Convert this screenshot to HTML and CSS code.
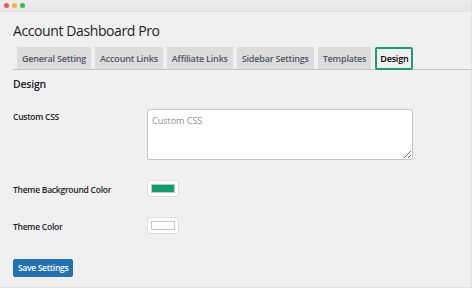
FILE: index.html
```html
<!DOCTYPE html>
<html lang="en">
<head>
    <meta charset="UTF-8">
    <meta name="viewport" content="width=device-width, initial-scale=1.0">
    <title>Account Dashboard Pro</title>
    <link rel="stylesheet" href="styles.css">
</head>
<body>

    <div class="window">
        <div class="window-bar">
            <span class="dot red"></span>
            <span class="dot yellow"></span>
            <span class="dot green"></span>
        </div>

        <div class="wrap">
            <h1>Account Dashboard Pro</h1>

            <nav class="tabs">
                <a href="#" class="tab">General Setting</a>
                <a href="#" class="tab">Account Links</a>
                <a href="#" class="tab">Affiliate Links</a>
                <a href="#" class="tab">Sidebar Settings</a>
                <a href="#" class="tab">Templates</a>
                <a href="#" class="tab active">Design</a>
            </nav>

            <h2>Design</h2>

            <form class="settings">
                <div class="row row-textarea">
                    <label for="custom_css">Custom CSS</label>
                    <textarea id="custom_css" placeholder="Custom CSS"></textarea>
                </div>
                <div class="row">
                    <label for="theme_bg">Theme Background Color</label>
                    <span class="swatch" id="theme_bg"><span class="swatch-fill" style="background: #0f9d6c;"></span></span>
                </div>
                <div class="row">
                    <label for="theme_color">Theme Color</label>
                    <span class="swatch" id="theme_color"><span class="swatch-fill" style="background: #ffffff;"></span></span>
                </div>
                <button type="submit" class="save">Save Settings</button>
            </form>
        </div>
    </div>

</body>
</html>
```

FILE: styles.css
```css
body {
    margin: 0;
    background-color: #ffffff;
    font-family: "Open Sans", "Noto Sans", sans-serif;
    color: #1d2327;
}
.window {
    width: 471px;
    height: 287px;
    background-color: #f0f0f1;
    border-right: 1px solid #e2e2e4;
    border-bottom: 1px solid #e2e2e4;
    overflow: hidden;
}
.window-bar {
    height: 11px;
    background: linear-gradient(#ececed, #e6e6e7);
    border-bottom: 1px solid #e0e0e2;
    display: flex;
    align-items: center;
    gap: 3px;
    padding-left: 4px;
}
.dot {
    width: 5px;
    height: 5px;
    border-radius: 50%;
}
.dot.red { background-color: #f0565a; }
.dot.yellow { background-color: #f5b53a; }
.dot.green { background-color: #2fbf55; }
.wrap {
    padding-left: 13px;
}
h1 {
    margin: 0;
    padding-top: 9px;
    font-size: 14px;
    font-weight: 400;
    line-height: 20px;
    letter-spacing: -0.4px;
}
.tabs {
    display: flex;
    gap: 4px;
    margin-top: 6px;
    padding-left: 4px;
    border-bottom: 1px solid #c3c4c7;
    height: 22px;
}
.tab {
    display: flex;
    align-items: center;
    padding: 0 4px;
    background-color: #dcdcde;
    color: #50575e;
    font-size: 9px;
    font-weight: 600;
    letter-spacing: -0.2px;
    text-decoration: none;
    border: 1px solid #dcdcde;
    border-bottom: none;
}
.tab.active {
    background-color: #f0f0f1;
    color: #000000;
    border: 2px solid #1a9e6e;
    border-radius: 2px;
    height: 23px;
    padding: 0 3px;
    box-sizing: border-box;
}
h2 {
    margin: 0;
    padding-top: 6px;
    font-size: 10.5px;
    font-weight: 600;
    line-height: 16px;
    letter-spacing: -0.2px;
}
.settings {
    padding-top: 17px;
}
.row {
    display: flex;
    align-items: center;
    margin-bottom: 20px;
}
.row-textarea {
    align-items: flex-start;
}
.row label {
    width: 134px;
    font-size: 8.5px;
    font-weight: 600;
    letter-spacing: -0.25px;
    padding-top: 2px;
}
textarea {
    width: 266px;
    height: 51px;
    box-sizing: border-box;
    padding: 4px;
    border: 1px solid #c3c4c7;
    border-radius: 2px;
    font-family: inherit;
    font-size: 9px;
    resize: vertical;
}
textarea::placeholder {
    color: #8c8f94;
}
.swatch {
    width: 32px;
    height: 17px;
    box-sizing: border-box;
    padding: 3px;
    background-color: #ffffff;
    border: 1px solid #dcdcde;
    border-radius: 3px;
    display: flex;
}
.swatch-fill {
    flex: 1;
    border: 1px solid #c3c4c7;
}
.save {
    margin-top: 2px;
    padding: 0 4px;
    height: 18px;
    background-color: #2271b1;
    color: #ffffff;
    border: 1px solid #2271b1;
    border-radius: 2px;
    font-family: inherit;
    font-size: 8.5px;
    font-weight: 600;
    letter-spacing: -0.3px;
    cursor: pointer;
}
```
